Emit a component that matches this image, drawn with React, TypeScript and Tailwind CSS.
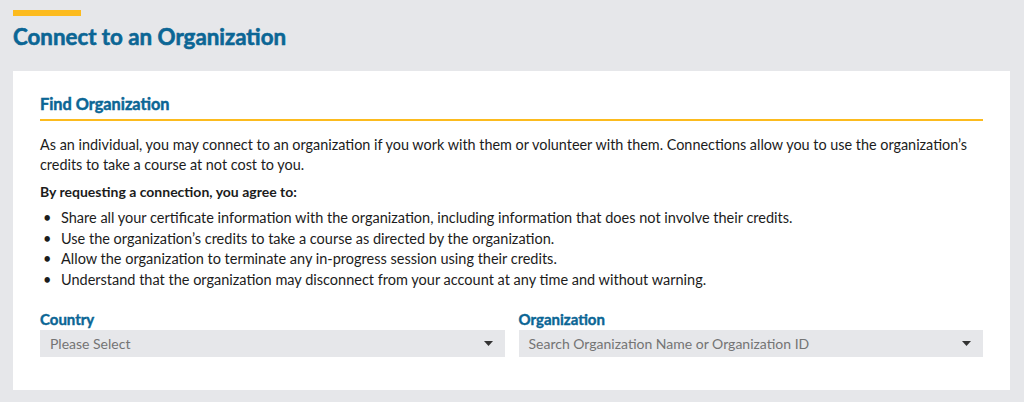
const bullets = [
  'Share all your certificate information with the organization, including information that does not involve their credits.',
  'Use the organization’s credits to take a course as directed by the organization.',
  'Allow the organization to terminate any in-progress session using their credits.',
  'Understand that the organization may disconnect from your account at any time and without warning.',
];

function Caret() {
  return (
    <svg width="9" height="5" viewBox="0 0 9 5" className="shrink-0">
      <path d="M0 0h9L4.5 5z" fill="#333" />
    </svg>
  );
}

function SelectField({ label, placeholder }: { label: string; placeholder: string }) {
  return (
    <div className="flex-1 flex flex-col">
      <span className="text-[15px] leading-[18px] font-bold text-[#0b6695] [-webkit-text-stroke:0.4px_#0b6695]">{label}</span>
      <div className="mt-[2px] h-[27px] bg-[#e6e7ea] flex items-center justify-between pl-[10px] pr-[12px]">
        <span className="text-[14px] text-[#747474]">{placeholder}</span>
        <Caret />
      </div>
    </div>
  );
}

export default function App() {
  return (
    <div
      className="w-[1024px] h-[402px] bg-[#e6e7ea] px-[13px] pt-[10px] text-[#1c1c1c]"
      style={{ fontFamily: 'Lato, "Open Sans", sans-serif' }}
    >
      <div className="w-[68px] h-[6px] bg-[#fcbb1e]" />
      <h1 className="mt-[7px] text-[22.3px] leading-[28px] font-bold text-[#0b6695] [-webkit-text-stroke:0.6px_#0b6695]">
        Connect to an Organization
      </h1>

      <div className="mt-[20px] w-[997px] h-[319px] bg-white px-[27px] pt-[23px]">
        <h2 className="text-[16.3px] leading-[20px] font-bold text-[#0b6695] [-webkit-text-stroke:0.5px_#0b6695]">
          Find Organization
        </h2>
        <div className="mt-[5px] h-[2px] bg-[#fcbb1e]" />

        <p className="mt-[14px] text-[14.4px] leading-[20px]">
          As an individual, you may connect to an organization if you work with them or volunteer with them. Connections allow you to use the organization’s credits to take a course at not cost to you.
        </p>
        <p className="mt-[7px] text-[14px] leading-[20px] font-bold">By requesting a connection, you agree to:</p>

        <ul className="mt-[6px] text-[14.5px] leading-[20.5px]">
          {bullets.map((b) => (
            <li key={b} className="flex">
              <span className="w-[21px] shrink-0 pl-[3px]">•</span>
              <span>{b}</span>
            </li>
          ))}
        </ul>

        <div className="mt-[20px] flex gap-[14px]">
          <SelectField label="Country" placeholder="Please Select" />
          <SelectField label="Organization" placeholder="Search Organization Name or Organization ID" />
        </div>
      </div>
    </div>
  );
}
